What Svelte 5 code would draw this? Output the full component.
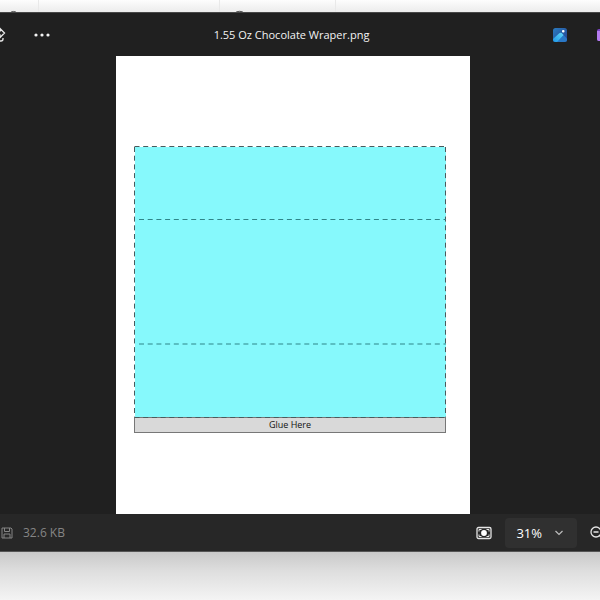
<script>
  let fileName = '1.55 Oz Chocolate Wraper.png';
  let fileSize = '32.6 KB';
  let zoom = '31%';
</script>

<div class="desktop">
  <div class="behind">
    <svg width="340" height="13" viewBox="0 0 340 13" aria-hidden="true">
      <path d="M38.500 0V13M219.500 0V13M335.500 0V13" stroke="#e9e9e9" />
      <path d="M10 13a4 3 0 0 1 7 0M235 13a5 3 0 0 1 9 0" fill="#aaa" stroke="#555" />
      <path d="M56 12.500h9" stroke="#aaa" />
    </svg>
  </div>

  <div class="window">
    <header class="titlebar">
      <div class="tools">
        <button aria-label="Share">
          <svg width="16" height="16" viewBox="0 0 16 16" fill="none" stroke="#e8e8e8" stroke-width="1.300">
            <path d="M6 3H4a2 2 0 0 0-2 2v7a2 2 0 0 0 2 2h7a2 2 0 0 0 2-2v-1" />
            <path d="M10 1.500L14.500 6L10 10.500V8C8 8 7 8.500 5.500 10.500C6 7 7.500 4.500 10 4.200Z" />
          </svg>
        </button>
        <button aria-label="See more">
          <svg width="16" height="16" viewBox="0 0 16 16" fill="#f4f4f4">
            <circle cx="2" cy="8" r="1.600" />
            <circle cx="8" cy="8" r="1.600" />
            <circle cx="14" cy="8" r="1.600" />
          </svg>
        </button>
      </div>
      <h1>{fileName}</h1>
      <div class="apps">
        <button aria-label="Photos">
          <svg width="14" height="14" viewBox="0 0 14 14">
            <defs>
              <linearGradient id="sky" x1="0" y1="0" x2="1" y2="1">
                <stop offset="0" stop-color="#2b7cc0" />
                <stop offset="1" stop-color="#24418f" />
              </linearGradient>
              <linearGradient id="hill" x1="0" y1="1" x2="1" y2="0">
                <stop offset="0" stop-color="#1c95e4" />
                <stop offset="1" stop-color="#62d8fa" />
              </linearGradient>
            </defs>
            <rect width="14" height="14" rx="2.500" fill="url(#sky)" />
            <path d="M4 8L6.500 5.500Q8 4.500 9.500 6L14 10.500V11.500A2.500 2.500 0 0 1 11.500 14H4Z" fill="#2a78c6" />
            <path d="M0 11L6 5.500Q8 4 9.500 6L10.500 7L4 14H2.500A2.500 2.500 0 0 1 0 11.500Z" fill="url(#hill)" />
            <rect x="9" y="2" width="2.500" height="2.500" rx="1" fill="#fff" />
          </svg>
        </button>
        <button aria-label="Video editor">
          <svg width="14" height="14" viewBox="0 0 14 14">
            <rect y="1" width="14" height="12" rx="2" fill="#7b43c4" />
            <path d="M0 3H14V11a2 2 0 0 1-2 2H2a2 2 0 0 1-2-2Z" fill="#b57cf0" />
          </svg>
        </button>
      </div>
    </header>

    <main class="viewer">
      <svg class="sheet" viewBox="0 0 354 458" role="img" aria-label={fileName}>
        <rect width="354" height="458" fill="#fff" />
        <rect x="19" y="91" width="311" height="270" fill="#86f9fc" />
        <rect x="18.500" y="361.500" width="311" height="15" fill="#d9d9d9" stroke="#777" />
        <g class="cuts">
          <path d="M18.500 90.500H330" />
          <path d="M18.500 91V361" />
          <path d="M329.500 91V361" />
          <path d="M18.500 361.500H330" />
        </g>
        <g class="folds">
          <path d="M23 163.500H330" />
          <path d="M23 288H330" />
        </g>
        <text x="174" y="372">Glue Here</text>
      </svg>
    </main>

    <footer class="statusbar">
      <div class="info">
        <svg width="12" height="12" viewBox="0 0 12 12" fill="none" stroke="#858585">
          <path d="M1 1H10L11 2V11H1Z" />
          <path d="M3.500 1V4.500H8.500V1M3 11V7H9V11" />
        </svg>
        <span>{fileSize}</span>
      </div>
      <div class="view">
        <button aria-label="Zoom to fit">
          <svg width="16" height="14" viewBox="0 0 16 14" fill="none" stroke="#e6e6e6">
            <rect x="1" y="1.500" width="14" height="11" rx="1.500" stroke-width="1.300" />
            <circle cx="8" cy="7" r="2.900" fill="#fff" stroke="none" />
            <path d="M3 5.500V3.500H5.500M10.500 3.500H13V5.500M13 8.500V10.500H10.500M5.500 10.500H3V8.500" />
          </svg>
        </button>
        <button class="zoom">
          {zoom}
          <svg width="10" height="10" viewBox="0 0 10 10" fill="none" stroke="#bdbdbd" stroke-width="1.200">
            <path d="M1.500 3L5 6.500L8.500 3" />
          </svg>
        </button>
        <button aria-label="Zoom out">
          <svg width="14" height="14" viewBox="0 0 14 14" fill="none" stroke="#e6e6e6" stroke-width="1.300">
            <circle cx="6" cy="6" r="5" />
            <path d="M3.500 6h5M9.500 9.500L13 13" />
          </svg>
        </button>
      </div>
    </footer>
  </div>

  <div class="shadow"></div>
</div>

<style>
  :global(body) {
    margin: 0;
    background: #f5f5f5;
    font-family: 'Open Sans', 'Noto Sans', sans-serif;
  }

  .desktop {
    display: flex;
    flex-direction: column;
    height: 100vh;
    overflow: hidden;
  }

  .behind {
    height: 12px;
    background: linear-gradient(#fdfdfd, #ececec);
  }
  .behind svg {
    display: block;
  }

  .window {
    flex: 1;
    display: flex;
    flex-direction: column;
    min-height: 0;
    background: #202020;
    border-top: 1px solid #484848;
    border-bottom: 1px solid #555;
  }

  button {
    display: flex;
    align-items: center;
    padding: 0;
    border: none;
    background: none;
    color: #fff;
    font: inherit;
  }

  .titlebar {
    display: grid;
    grid-template-columns: 1fr auto 1fr;
    align-items: center;
    height: 43px;
    margin: 0 -11px 0 -10px;
  }
  .tools,
  .apps {
    display: flex;
    align-items: center;
    gap: 28px;
  }
  .apps {
    justify-content: flex-end;
    gap: 30px;
  }
  h1 {
    margin: 0;
    padding-right: 18px;
    color: #f3f3f3;
    font-size: 11px;
    font-weight: 400;
    line-height: 16px;
  }

  .viewer {
    flex: 1;
    display: flex;
    justify-content: center;
    min-height: 0;
    padding-right: 15px;
  }
  .sheet {
    height: 100%;
  }
  .cuts,
  .folds {
    fill: none;
    stroke: #4a5a5c;
    stroke-dasharray: 5 3.7;
  }
  .folds {
    stroke: #2f8588;
  }
  .sheet text {
    fill: #111;
    font-family: 'Open Sans', sans-serif;
    font-size: 9px;
    text-anchor: middle;
  }

  .statusbar {
    display: flex;
    align-items: center;
    justify-content: space-between;
    height: 37px;
    margin-right: -4px;
    background: #272727;
    font-size: 12px;
  }
  .info {
    display: flex;
    align-items: center;
    gap: 10px;
    padding-left: 1px;
    color: #858585;
  }
  .view {
    display: flex;
    align-items: center;
    gap: 13px;
  }
  .zoom {
    gap: 12px;
    height: 30px;
    padding: 0 13px 0 11px;
    border-radius: 4px;
    background: #303030;
    font-size: 13px;
  }

  .shadow {
    height: 48px;
    background: linear-gradient(#c9c9c9, #dedede 40%, #f4f4f4);
  }
</style>
